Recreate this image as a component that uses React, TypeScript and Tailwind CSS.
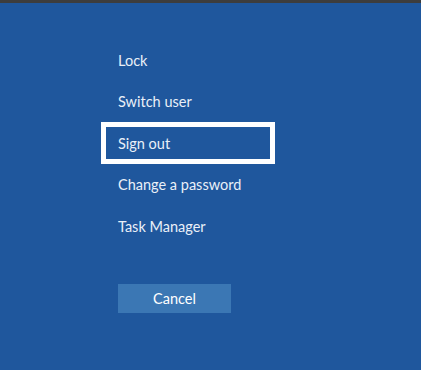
import React from "react";

const items = ["Lock", "Switch user", "Sign out", "Change a password", "Task Manager"];

export default function App() {
  return (
    <div
      className="w-[421px] h-[370px] bg-[#1f579d] border-t-[3px] border-[#3d3d3d] flex flex-col text-[#eaf0f8] text-[14.5px]"
      style={{ fontFamily: 'Lato, "Noto Sans", sans-serif' }}
    >
      <ul className="pt-[36px] flex flex-col">
        {items.map((label) => (
          <li
            key={label}
            className={`ml-[101px] w-[174px] h-[41.5px] flex items-center pl-[12px] pt-[2px] border-[5px] ${
              label === "Sign out" ? "border-white" : "border-transparent"
            }`}
          >
            {label}
          </li>
        ))}
      </ul>
      <button className="ml-[118px] mt-[37px] w-[113px] h-[29px] pt-[2px] bg-[#3b77b4] text-white text-[14.5px] flex items-center justify-center">
        Cancel
      </button>
    </div>
  );
}
